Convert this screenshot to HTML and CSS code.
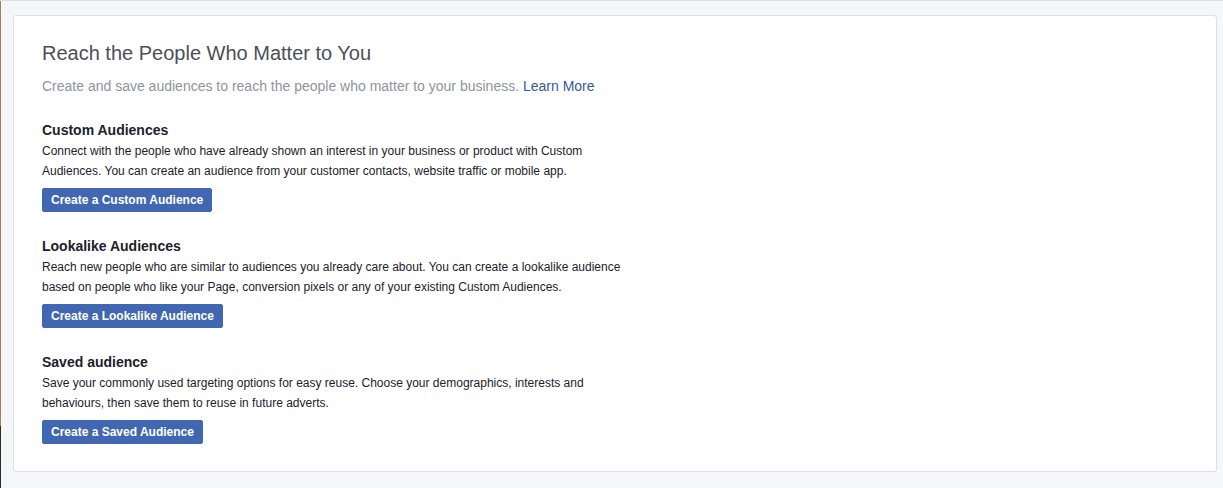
FILE: index.html
```html
<!DOCTYPE html>
<html lang="en">
<head>
<meta charset="utf-8">
<title>Audiences</title>
<link rel="stylesheet" href="styles.css">
</head>
<body>
<div class="page">
  <section class="card">
    <h1 class="card-title">Reach the People Who Matter to You</h1>
    <p class="card-intro">Create and save audiences to reach the people who matter to your business. <a class="link" href="#">Learn More</a></p>

    <div class="audience">
      <h2 class="audience-name">Custom Audiences</h2>
      <p class="audience-desc">Connect with the people who have already shown an interest in your business or product with Custom Audiences. You can create an audience from your customer contacts, website traffic or mobile app.</p>
      <button class="btn" type="button">Create a Custom Audience</button>
    </div>

    <div class="audience">
      <h2 class="audience-name">Lookalike Audiences</h2>
      <p class="audience-desc">Reach new people who are similar to audiences you already care about. You can create a lookalike audience based on people who like your Page, conversion pixels or any of your existing Custom Audiences.</p>
      <button class="btn" type="button">Create a Lookalike Audience</button>
    </div>

    <div class="audience">
      <h2 class="audience-name">Saved audience</h2>
      <p class="audience-desc">Save your commonly used targeting options for easy reuse. Choose your demographics, interests and behaviours, then save them to reuse in future adverts.</p>
      <button class="btn" type="button">Create a Saved Audience</button>
    </div>
  </section>
</div>
</body>
</html>
```

FILE: styles.css
```css
* {
  box-sizing: border-box;
}

html,
body {
  margin: 0;
  padding: 0;
  height: 100%;
}

body {
  font-family: "Liberation Sans", Helvetica, Arial, sans-serif;
  background: #f5f6f7;
  color: #1d2129;
}

.page {
  min-height: 100%;
  border-top: 1px solid #dddfe2;
  padding: 14px 6px 16px 13px;
  /* thin edge strip of the neighbouring pane */
  background:
    linear-gradient(#a08158, #a08158) no-repeat 0 0 / 1px 425px,
    linear-gradient(#2d2a27, #2d2a27) no-repeat 0 425px / 1px 100%,
    #f5f6f7;
}

.card {
  background: #fff;
  border: 1px solid #dddfe2;
  border-radius: 3px;
  padding: 25px 28px 27px;
  height: 457px;
}

.card-title {
  margin: 0;
  font-size: 20px;
  line-height: 24px;
  font-weight: normal;
  color: #4b4f56;
}

.card-intro {
  margin: 12px 0 0;
  font-size: 14px;
  line-height: 18px;
  color: #90949c;
}

.link {
  color: #365899;
  text-decoration: none;
}

.audience {
  margin-top: 25px;
}

.audience + .audience {
  margin-top: 24px;
}

.audience-name {
  margin: 0;
  font-size: 14px;
  line-height: 20px;
  font-weight: bold;
  color: #1d2129;
}

.audience-desc {
  margin: 1px 0 0;
  max-width: 590px;
  font-size: 12px;
  line-height: 20px;
  color: #1d2129;
}

.btn {
  display: block;
  margin-top: 7px;
  height: 24px;
  padding: 0 8px;
  border: 1px solid #4267b2;
  border-radius: 2px;
  background: #4267b2;
  color: #fff;
  font-family: inherit;
  font-size: 12px;
  font-weight: bold;
  line-height: 22px;
  cursor: pointer;
}
```
